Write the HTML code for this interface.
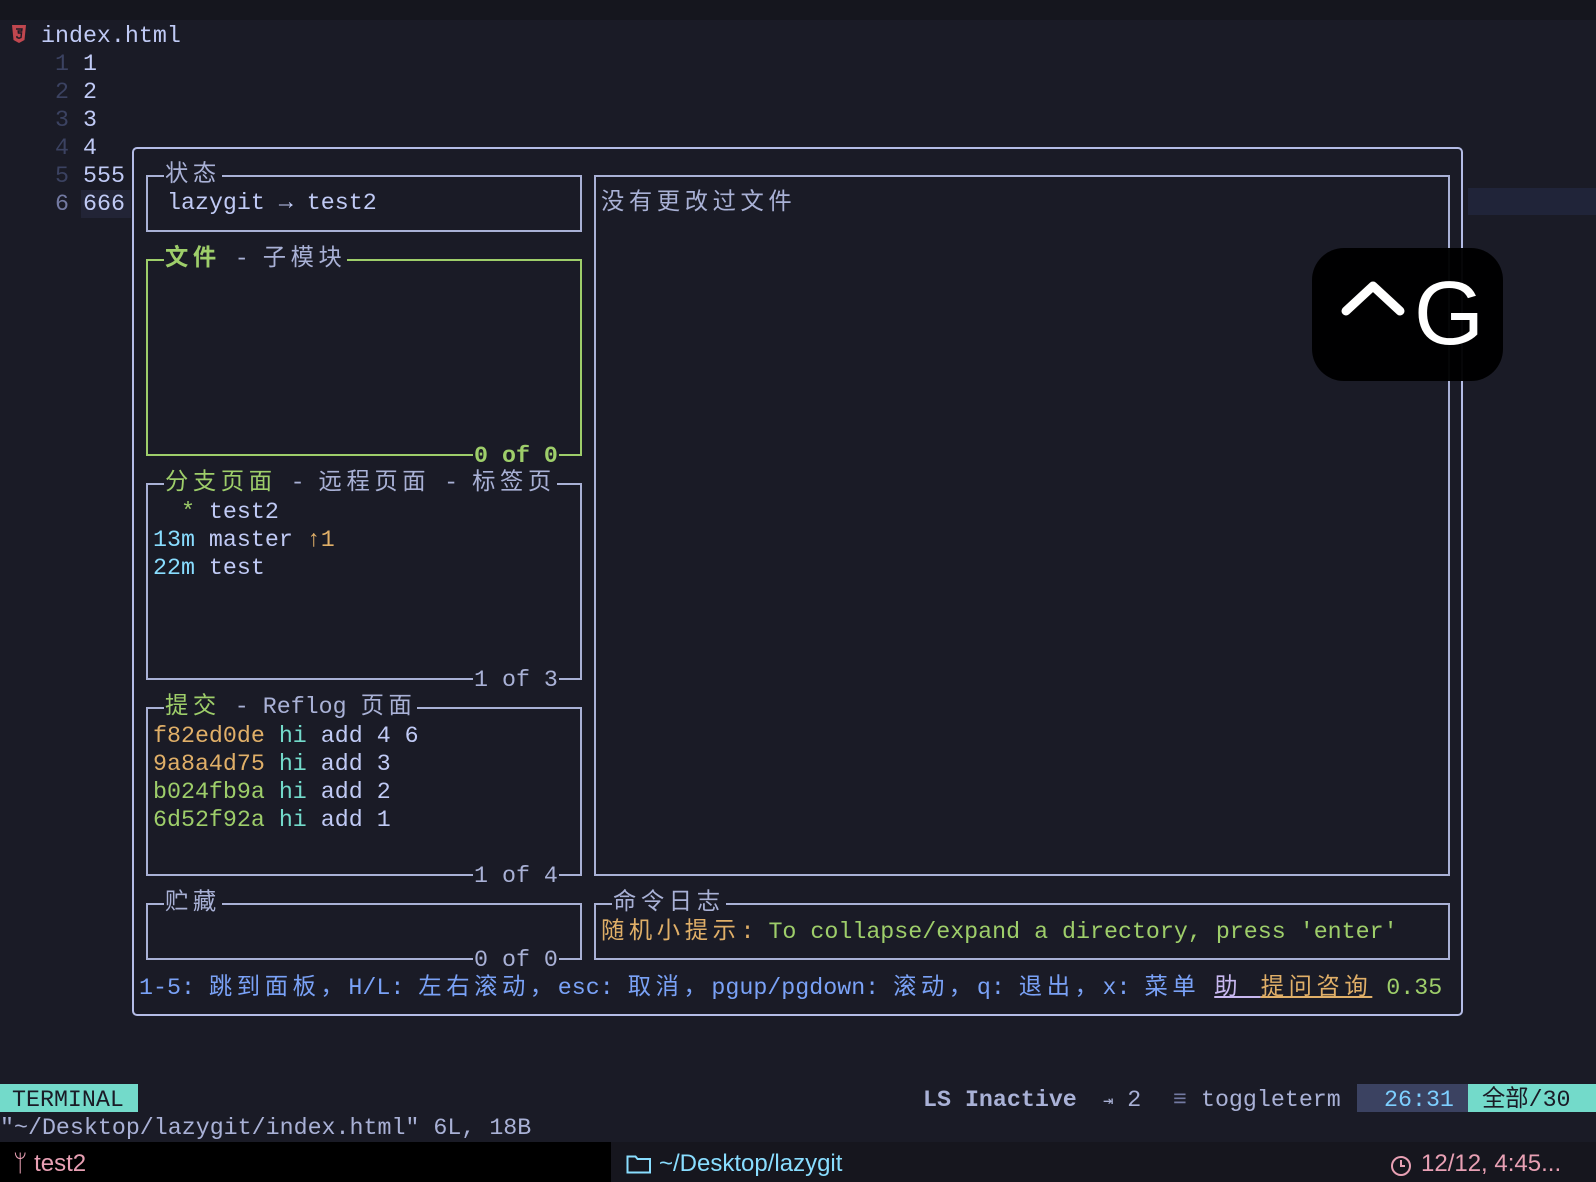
<!DOCTYPE html>
<html><head><meta charset="utf-8">
<style>
*{margin:0;padding:0;box-sizing:border-box}
html,body{width:1596px;height:1182px;overflow:hidden;background:#1a1b26}
body{position:relative;font-family:"Liberation Mono","Noto Sans CJK SC",monospace;font-size:23.3px;color:#c0caf5}
.t{position:absolute;white-space:pre;line-height:28px;height:28px;transform:translateY(2px)}
.c{letter-spacing:4.6px}
.box{position:absolute;border:2px solid #a9b1d6}
.ttl{position:absolute;background:#1a1b26;white-space:pre;line-height:28px;padding:0 1px;transform:translateY(2px)}
.g{color:#9ece6a}.o{color:#e0af68}.cy{color:#89ddff}.tl{color:#73daca}.bl{color:#7aa2f7}.mu{color:#a9b1d6}
</style></head><body>
<div style="position:absolute;left:0;top:0;width:1596px;height:20px;background:#15161e"></div>
<svg style="position:absolute;left:11px;top:24px" width="16" height="20" viewBox="0 0 16 20"><path d="M1 1h14l-1.5 15L8 19l-5.5-3z" fill="#c0474f"/><path d="M5 5h6l-.3 2H7.2l.2 2h3.1l-.5 4.5L8 14.2l-2-.7-.1-1.6" fill="none" stroke="#1a1b26" stroke-width="1.4"/></svg>
<div class="t" style="left:41px;top:20px">index.html</div>
<div class="t" style="left:55px;top:48px;color:#3b4261">1</div><div class="t" style="left:83px;top:48px">1</div>
<div class="t" style="left:55px;top:76px;color:#3b4261">2</div><div class="t" style="left:83px;top:76px">2</div>
<div class="t" style="left:55px;top:104px;color:#3b4261">3</div><div class="t" style="left:83px;top:104px">3</div>
<div class="t" style="left:55px;top:132px;color:#3b4261">4</div><div class="t" style="left:83px;top:132px">4</div>
<div class="t" style="left:55px;top:160px;color:#3b4261">5</div><div class="t" style="left:83px;top:160px">555</div>
<div style="position:absolute;left:81px;top:190px;width:50px;height:28px;background:#222436"></div>
<div style="position:absolute;left:1468px;top:188px;width:128px;height:27px;background:#202439"></div>
<div class="t" style="left:55px;top:188px;color:#737aa2">6</div><div class="t" style="left:83px;top:188px">666</div>

<div class="box" style="left:132px;top:147px;width:1331px;height:869px;border-radius:5px;background:#1a1b26;border-color:#b4bce6"></div>

<div class="box" style="left:146px;top:175px;width:436px;height:57px"></div>
<div class="ttl c mu" style="left:164px;top:159px">状态</div>
<div class="t" style="left:167px;top:187px">lazygit → test2</div>

<div class="box" style="left:146px;top:259px;width:436px;height:197px;border-color:#9ece6a"></div>
<div class="ttl" style="left:164px;top:243px"><b class="g c">文件</b> <span class="mu">- <span class="c">子模块</span></span></div>
<div class="ttl g" style="left:473px;top:440px;font-weight:bold">0 of 0</div>

<div class="box" style="left:146px;top:483px;width:436px;height:197px"></div>
<div class="ttl mu" style="left:164px;top:467px"><span class="g c">分支页面</span> - <span class="c">远程页面</span> - <span class="c">标签页</span></div>
<div class="t" style="left:153px;top:496px">  <span class="g">*</span> test2</div>
<div class="t" style="left:153px;top:524px"><span class="cy">13m</span> master <span class="o">↑1</span></div>
<div class="t" style="left:153px;top:552px"><span class="cy">22m</span> test</div>
<div class="ttl mu" style="left:473px;top:664px">1 of 3</div>

<div class="box" style="left:146px;top:707px;width:436px;height:169px"></div>
<div class="ttl mu" style="left:164px;top:691px"><span class="g c">提交</span> - Reflog <span class="c">页面</span></div>
<div class="t" style="left:153px;top:720px"><span class="o">f82ed0de</span> <span class="tl">hi</span> add 4 6</div>
<div class="t" style="left:153px;top:748px"><span class="o">9a8a4d75</span> <span class="tl">hi</span> add 3</div>
<div class="t" style="left:153px;top:776px"><span class="g">b024fb9a</span> <span class="tl">hi</span> add 2</div>
<div class="t" style="left:153px;top:804px"><span class="g">6d52f92a</span> <span class="tl">hi</span> add 1</div>
<div class="ttl mu" style="left:473px;top:860px">1 of 4</div>

<div class="box" style="left:146px;top:903px;width:436px;height:57px"></div>
<div class="ttl c mu" style="left:164px;top:887px">贮藏</div>
<div class="ttl mu" style="left:473px;top:944px">0 of 0</div>

<div class="box" style="left:594px;top:175px;width:856px;height:701px"></div>
<div class="t c mu" style="left:601px;top:187px">没有更改过文件</div>

<div class="box" style="left:594px;top:903px;width:856px;height:57px"></div>
<div class="ttl c mu" style="left:612px;top:887px">命令日志</div>
<div class="t" style="left:601px;top:916px"><span class="o c">随机小提示</span><span class="o">:</span> <span class="g">To collapse/expand a directory, press 'enter'</span></div>

<div class="t bl" style="left:139px;top:972px">1-5: <span class="c">跳到面板，</span>H/L: <span class="c">左右滚动，</span>esc: <span class="c">取消，</span>pgup/pgdown: <span class="c">滚动，</span>q: <span class="c">退出，</span>x: <span class="c">菜单</span> <span class="c" style="color:#c8b8f0;text-decoration:underline">助 </span><span class="o c" style="text-decoration:underline">提问咨询</span> <span class="g">0.35</span></div>

<div style="position:absolute;left:1312px;top:248px;width:191px;height:133px;background:#000;border-radius:32px;opacity:.97"></div>
<svg style="position:absolute;left:1312px;top:248px" width="191" height="133"><polyline points="34,63 61,38 88,63" fill="none" stroke="#fff" stroke-width="9" stroke-linecap="round" stroke-linejoin="round"/></svg>
<div style="position:absolute;left:1414px;top:264px;font-family:'Liberation Sans',sans-serif;font-size:90px;line-height:100px;color:#fff">G</div>

<div style="position:absolute;left:0;top:1084px;width:138px;height:28px;background:#73daca"></div>
<div class="t" style="left:12px;top:1084px;color:#1a1b26">TERMINAL</div>
<div class="t" style="left:923px;top:1084px;color:#a9b1d6;font-weight:bold">LS Inactive</div>
<div class="t" style="left:1103px;top:1084px;color:#a9b1d6"><span style="font-size:17px">⇥</span> 2</div>
<div class="t" style="left:1173px;top:1084px;color:#a9b1d6"><span style="color:#737aa2">≡</span> toggleterm</div>
<div style="position:absolute;left:1357px;top:1084px;width:111px;height:28px;background:#3b4261"></div>
<div class="t" style="left:1384px;top:1084px;color:#7dcfff">26:31</div>
<div style="position:absolute;left:1468px;top:1084px;width:128px;height:28px;background:#73daca"></div>
<div class="t" style="left:1482px;top:1084px;color:#1a1b26">全部/30</div>
<div class="t" style="left:0;top:1112px;color:#a9b1d6">"~/Desktop/lazygit/index.html" 6L, 18B</div>

<div style="position:absolute;left:0;top:1142px;width:1596px;height:40px;background:#16161e"></div>
<div style="position:absolute;left:0;top:1142px;width:611px;height:40px;background:#000"></div>
<div style="position:absolute;left:13px;top:1148px;font-family:'Liberation Sans',sans-serif;font-size:24px;line-height:32px;color:#e8a0b4;white-space:pre">ᛘ test2</div>
<svg style="position:absolute;left:626px;top:1154px" width="26" height="20"><path d="M1.5 2.5h8l2 2.5h12.5v13.5h-22.5z" fill="none" stroke="#89ddff" stroke-width="2"/></svg>
<div style="position:absolute;left:659px;top:1148px;font-family:'Liberation Sans',sans-serif;font-size:24px;line-height:32px;color:#89ddff">~/Desktop/lazygit</div>
<svg style="position:absolute;left:1390px;top:1155px" width="22" height="22"><circle cx="11" cy="11" r="9" fill="none" stroke="#e8a0b4" stroke-width="2"/><path d="M11 5v6h4" fill="none" stroke="#e8a0b4" stroke-width="2"/></svg>
<div style="position:absolute;left:1421px;top:1148px;font-family:'Liberation Sans',sans-serif;font-size:24px;line-height:32px;color:#e8a0b4">12/12, 4:45...</div>
</body></html>
